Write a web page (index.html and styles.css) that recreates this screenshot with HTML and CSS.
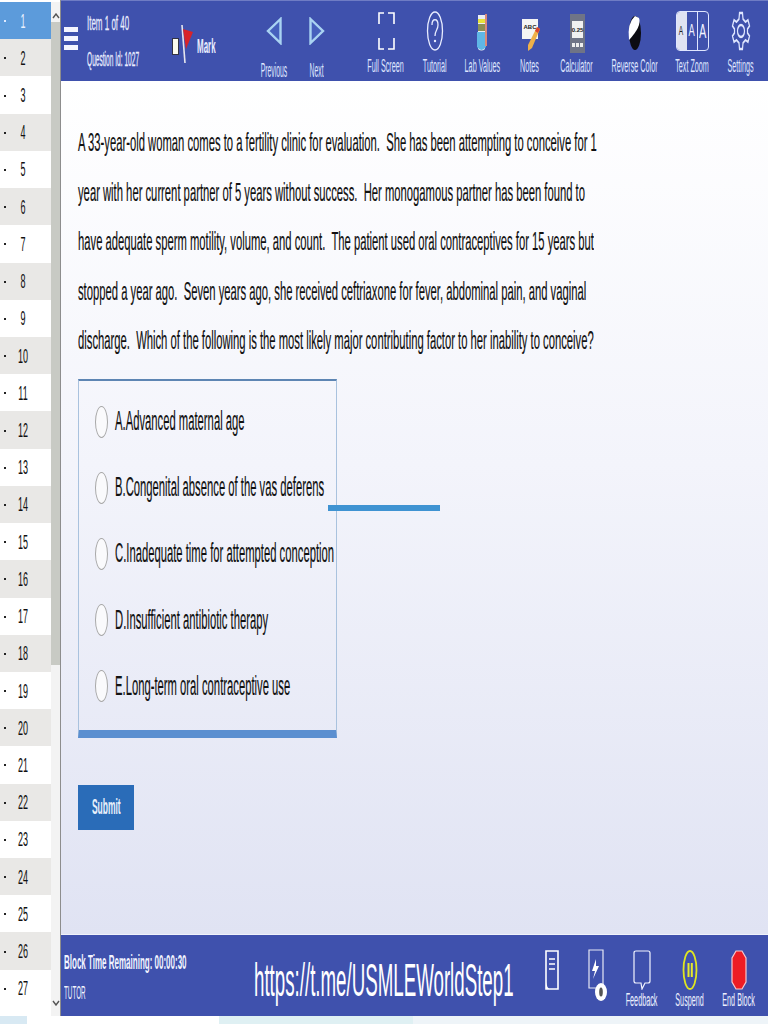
FILE: index.html
```html
<!DOCTYPE html>
<html lang="en">
<head>
<meta charset="utf-8">
<title>Item 1 of 40</title>
<link rel="stylesheet" href="styles.css">
</head>
<body>
<div class="app">
  <div class="top">
    <aside class="side">
      <ul class="rows" id="rows">
        <li class="row active"><i></i><span>1</span></li>
        <li class="row"><i></i><span>2</span></li><li class="row"><i></i><span>3</span></li><li class="row"><i></i><span>4</span></li>
        <li class="row"><i></i><span>5</span></li><li class="row"><i></i><span>6</span></li><li class="row"><i></i><span>7</span></li>
        <li class="row"><i></i><span>8</span></li><li class="row"><i></i><span>9</span></li><li class="row"><i></i><span>10</span></li>
        <li class="row"><i></i><span>11</span></li><li class="row"><i></i><span>12</span></li><li class="row"><i></i><span>13</span></li>
        <li class="row"><i></i><span>14</span></li><li class="row"><i></i><span>15</span></li><li class="row"><i></i><span>16</span></li>
        <li class="row"><i></i><span>17</span></li><li class="row"><i></i><span>18</span></li><li class="row"><i></i><span>19</span></li>
        <li class="row"><i></i><span>20</span></li><li class="row"><i></i><span>21</span></li><li class="row"><i></i><span>22</span></li>
        <li class="row"><i></i><span>23</span></li><li class="row"><i></i><span>24</span></li><li class="row"><i></i><span>25</span></li>
        <li class="row"><i></i><span>26</span></li><li class="row"><i></i><span>27</span></li>
      </ul>
      <div class="scroll">
        <svg class="arrow" viewBox="0 0 8 6"><path d="M1 5 4 1l3 4" fill="none" stroke="#555" stroke-width="1.4"/></svg>
        <div class="thumb"></div>
        <svg class="arrow down" viewBox="0 0 8 6"><path d="M1 1l3 4 3-4" fill="none" stroke="#555" stroke-width="1.4"/></svg>
      </div>
    </aside>
    <main class="main">
      <header class="head">
        <div class="burger"><b></b><b></b><b></b></div>
        <div class="item">
          <div class="t t-item">Item 1 of 40</div>
          <div class="t t-qid">Question Id: 1027</div>
        </div>
        <div class="mark">
          <span class="box"></span>
          <svg class="flag" viewBox="0 0 12 38"><path d="M1 0 4 38" stroke="#e6e6ee" stroke-width="1.6"/><path d="M2 4l10 3-7 17z" fill="#d8232a"/></svg>
          <span class="t t-mark">Mark</span>
        </div>
        <div class="nav">
          <div class="tool"><svg class="ic-nav" viewBox="0 0 16 28"><path d="M14.500 2 2 14l12.500 12z" fill="#4660bd" stroke="#a9d3f2" stroke-width="2.400"/></svg><span class="t lab nav-lab">Previous</span></div>
          <div class="tool"><svg class="ic-nav" viewBox="0 0 16 28"><path d="M1.500 2 14 14 1.500 26z" fill="#4660bd" stroke="#a9d3f2" stroke-width="2.400"/></svg><span class="t lab nav-lab">Next</span></div>
        </div>
        <div class="tools">
          <div class="tool"><svg class="ic" viewBox="0 0 40 40"><path d="M18 2h-5v11M22 2h6v11M13 27v11h5M28 27v11h-6" fill="none" stroke="#fff" stroke-width="1.600"/></svg><span class="t lab">Full Screen</span></div>
          <div class="tool"><svg class="ic" viewBox="0 0 40 40"><ellipse cx="20" cy="20" rx="7.500" ry="19" fill="none" stroke="#e8ecff" stroke-width="1.300"/><path d="M17 14c0-7 6-7 6 0 0 5-3 5-3 11" fill="none" stroke="#e8ecff" stroke-width="1.300"/><circle cx="20" cy="30" r="1.200" fill="#e8ecff"/></svg><span class="t lab">Tutorial</span></div>
          <div class="tool"><svg class="ic" viewBox="0 0 40 40"><path d="M16 4h7v34q-3.500 3-7 0z" fill="#e9eef5"/><path d="M15 21h9v15q-4.500 6-9 0z" fill="#5fb7e6"/><path d="M16 8h7v4h-7z" fill="#e7e23a"/><path d="M16 13h7v7h-7z" fill="#8a8f55"/><path d="M23 3h2v32h-2z" fill="#d98a7a"/></svg><span class="t lab">Lab Values</span></div>
          <div class="tool"><svg class="ic" viewBox="0 0 40 40"><path d="M12 8h16v20H12z" fill="#f4f4f4"/><text class="abc" x="20" y="18">ABC</text><path d="M27 16l3 2-8 19-4 3 0-6z" fill="#eeb049"/><path d="M27 16l3 2-2 4-3-2z" fill="#d9432f"/></svg><span class="t lab">Notes</span></div>
          <div class="tool"><svg class="ic" viewBox="0 0 40 40"><path d="M13 3h15v39H13z" fill="#6f7486"/><path d="M15 10h11v17H15z" fill="#f1f1f1"/><text class="abc" x="20.500" y="21">0.25</text><path d="M15 32h3v4h-3zM19 32h3v4h-3zM23 32h3v4h-3z" fill="#eee"/></svg><span class="t lab">Calculator</span></div>
          <div class="tool"><svg class="ic" viewBox="0 0 40 40"><ellipse cx="20" cy="22" rx="6" ry="17" fill="#0c0c12"/><path d="M24 7Q27 15 14 29 12 12 20 5z" fill="#fff"/></svg><span class="t lab">Reverse Color</span></div>
          <div class="tool"><div class="zoom"><span class="z1"><em>A</em></span><span class="z2"><em>A</em></span><span class="z3"><em>A</em></span></div><span class="t lab">Text Zoom</span></div>
          <div class="tool"><svg class="ic" viewBox="0 0 40 40"><g transform="translate(10 0) scale(.5 1)"><path d="M17 2h6l1 6 5 3 5-2 3 6-4 3v4l4 3-3 6-5-2-5 3-1 6h-6l-1-6-5-3-5 2-3-6 4-3v-4l-4-3 3-6 5 2 5-3z" fill="none" stroke="#dfe6ff" stroke-width="2.400"/><ellipse cx="20" cy="20" rx="7" ry="6" fill="none" stroke="#dfe6ff" stroke-width="2.400"/></g></svg><span class="t lab">Settings</span></div>
        </div>
      </header>
      <section class="content">
        <div class="stem">
          <p class="t q">A 33-year-old woman comes to a fertility clinic for evaluation.&nbsp; She has been attempting to conceive for 1</p>
          <p class="t q">year with her current partner of 5 years without success.&nbsp; Her monogamous partner has been found to</p>
          <p class="t q">have adequate sperm motility, volume, and count.&nbsp; The patient used oral contraceptives for 15 years but</p>
          <p class="t q">stopped a year ago.&nbsp; Seven years ago, she received ceftriaxone for fever, abdominal pain, and vaginal</p>
          <p class="t q">discharge.&nbsp; Which of the following is the most likely major contributing factor to her inability to conceive?</p>
        </div>
        <div class="choices">
          <div class="opt"><span class="radio"></span><span class="t o">A.Advanced maternal age</span></div>
          <div class="opt"><span class="radio"></span><span class="t o">B.Congenital absence of the vas deferens</span></div>
          <div class="opt"><span class="radio"></span><span class="t o">C.Inadequate time for attempted conception</span></div>
          <div class="opt"><span class="radio"></span><span class="t o">D.Insufficient antibiotic therapy</span></div>
          <div class="opt"><span class="radio"></span><span class="t o">E.Long-term oral contraceptive use</span></div>
        </div>
        <div class="submit"><span class="t s">Submit</span></div>
        <div class="stray"></div>
      </section>
      <footer class="foot">
        <div class="timer">
          <div class="t f-b">Block Time Remaining: 00:00:30</div>
          <div class="t f-s">TUTOR</div>
        </div>
        <div class="t url">https://t.me/USMLEWorldStep1</div>
        <div class="ftools">
          <div class="tool"><svg class="fi" viewBox="0 0 30 40"><path d="M9 1h12v38H9z M9 32q0 7 3 7" fill="none" stroke="#fff" stroke-width="1.600"/><path d="M12 9h6M12 14h6M12 19h6" stroke="#fff" stroke-width="1.600"/></svg></div>
          <div class="tool"><svg class="fi fi-open" viewBox="0 0 30 40"><path d="M8 0h14v38H8z" fill="none" stroke="#e6e8f5" stroke-width="1.200"/><path d="M15 9l-4 12h3l-2 8 6-13h-3z" fill="#fff"/><ellipse cx="20" cy="42" rx="6" ry="9" fill="#fff"/><ellipse cx="20" cy="42" rx="1.800" ry="4.500" fill="#555"/></svg></div>
          <div class="tool"><svg class="fi" viewBox="0 0 30 40"><path d="M9 1h12q2 0 2 2v28q0 2-2 2h-3l-3 6-1-6H9q-2 0-2-2V3q0-2 2-2z" fill="none" stroke="#f2f4ff" stroke-width="1.200"/></svg><span class="t lab">Feedback</span></div>
          <div class="tool"><svg class="fi" viewBox="0 0 30 40"><ellipse cx="15" cy="20" rx="6.500" ry="19" fill="#3f51ad" stroke="#dfe620" stroke-width="1.800"/><path d="M12.500 13h2v14h-2zM15.800 13h2v14h-2z" fill="#e6ea2a"/></svg><span class="t lab">Suspend</span></div>
          <div class="tool"><svg class="fi" viewBox="0 0 30 40"><path d="M12 1h6l4 7v24l-4 7h-6l-4-7V8z" fill="#ee1c25" stroke="#f6c9cd" stroke-width="1.200"/></svg><span class="t lab">End Block</span></div>
        </div>
      </footer>
    </main>
  </div>
  <div class="strip"><span></span><span></span><span></span><span></span></div>
</div>
</body>
</html>
```
FILE: styles.css
```css
* { box-sizing: border-box; }
html, body { margin: 0; padding: 0; }
body { width: 768px; height: 1024px; overflow: hidden; background: #fff; font-family: "Liberation Sans", Arial, sans-serif; color: #111; }
.app { display: flex; flex-direction: column; height: 1024px; }
.top { display: flex; height: 1016px; }

.side { display: flex; width: 60px; flex: none; padding-top: 2px; background: #fff; }
.rows { list-style: none; margin: 0; padding: 0; width: 51px; flex: none; }
.row { display: flex; align-items: center; height: 37.23px; padding-top: 1px; font-size: 20px; background: #fff; }
.row:nth-child(even) { background: #e9e8e6; }
.row.active { background: #5c9bdb; color: #e8f1ff; }
.row i { width: 2px; height: 2px; margin-left: 4px; background: #222; flex: none; }
.row.active i { background: #dfeaff; }
.row span { width: 34px; text-align: center; transform: scaleX(.45); flex: none; }
.scroll { width: 9px; flex: none; display: flex; flex-direction: column; background: #f3f3f3; position: relative; }
.arrow { width: 8px; height: 6px; margin: 11px 0 0 1px; flex: none; }
.thumb { width: 9px; height: 643px; margin-top: 3px; background: #c8cac4; flex: none; }
.arrow.down { margin-top: 335px; }

.main { flex: 1; display: flex; flex-direction: column; border-left: 1px solid #8d8d8d; min-width: 0; }
.t { white-space: nowrap; transform-origin: 0 50%; }

.head { height: 81px; flex: none; display: flex; background: #3f51ad; border-top: 1px solid #6f7cc4; color: #e9edff; }
.burger { width: 26px; flex: none; padding: 26px 0 0 3px; }
.burger b { display: block; width: 14px; height: 5px; margin-bottom: 4px; background: #f5f5ff; }
.item { width: 85px; flex: none; display: flex; flex-direction: column; gap: 16px; padding-top: 12px; }
.t-item { font-size: 21px; line-height: 20px; transform: scaleX(.38); -webkit-text-stroke: .3px #e9edff; }
.t-qid { font-size: 20px; line-height: 20px; transform: scaleX(.33); -webkit-text-stroke: .3px #e9edff; }
.mark { width: 80px; flex: none; display: flex; align-items: center; padding-top: 5px; }
.box { width: 7px; height: 17px; margin-top: 5px; background: #fbfbef; border: 1px solid #334; flex: none; }
.flag { width: 12px; height: 38px; margin: 0 4px 0 2px; flex: none; }
.t-mark { font-size: 21px; font-weight: 700; transform: scaleX(.38); margin-top: 5px; }
.nav { display: grid; grid-template-columns: 44px 42px; width: 109px; flex: none; }
.nav .ic-nav { width: 16px; height: 28px; margin-top: 16px; flex: none; }
.nav .nav-lab { margin-top: 17px; font-size: 20px; line-height: 17px; transform: scaleX(.34); }
.tools { display: grid; grid-template-columns: 50px 48px 46px 50px 44px 72px 42px 55px; flex: none; }
.tool { display: flex; flex-direction: column; align-items: center; min-width: 0; }
.ic { width: 40px; height: 40px; margin-top: 10px; flex: none; overflow: visible; }
.lab { font-size: 18px; line-height: 17px; color: #dfe6ff; transform: scaleX(.4); transform-origin: 50% 50%; margin-top: 7px; }
.abc { font: 700 6px "Liberation Sans", sans-serif; text-anchor: middle; fill: #222; }
.zoom { display: flex; width: 33px; height: 40px; margin-top: 10px; border: 1px solid #dfe6ff; border-radius: 4px; overflow: hidden; background: #3f51ad; color: #f2f4ff; flex: none; }
.zoom span { flex: 1; min-width: 0; display: flex; align-items: center; justify-content: center; }
.zoom em { font-style: normal; display: block; transform: scaleX(.55); }
.z1 { background: #dfe3f2; color: #222; font-size: 12px; }
.z2 { font-size: 17px; border-right: 1px solid #dfe6ff; }
.z3 { font-size: 20px; }

.content { flex: 1; position: relative; min-height: 0; padding: 37px 0 0 17px; background: linear-gradient(#fff 0%, #f3f4fb 45%, #e0e3f3 100%); }
.q { margin: 0; font-size: 25.5px; line-height: 49.5px; height: 49.5px; transform: scaleX(.441); -webkit-text-stroke: .2px #111; }
.choices { width: 259px; height: 359px; margin-top: 13px; border: 1px solid #a9c2de; border-top: 2px solid #5d85b3; border-bottom: 8px solid #5b8fd0; padding-top: 8px; }
.opt { display: flex; align-items: center; height: 66.2px; padding-left: 16px; }
.radio { width: 13px; height: 32px; border: 1px solid #a8a8a8; border-radius: 50%; background: #fafafc; flex: none; margin-right: 7px; }
.o { font-size: 27px; transform: scaleX(.417); -webkit-text-stroke: .2px #111; }
.submit { width: 56px; height: 45px; margin-top: 47px; background: #2a6cb8; display: flex; align-items: center; justify-content: center; color: #e8f0fb; }
.s { font-size: 22px; font-weight: 700; transform: scaleX(.386); transform-origin: 50% 50%; }
.stray { position: absolute; left: 267px; top: 424px; width: 112px; height: 6px; background: #3f93d2; }

.foot { height: 82px; flex: none; display: flex; background: #3f51ad; border-top: 1px solid #f0f2fa; color: #f2f4ff; }
.timer { width: 193px; flex: none; padding: 18px 0 0 3px; display: flex; flex-direction: column; gap: 14px; }
.f-b { font-size: 20px; line-height: 18px; font-weight: 700; transform: scaleX(.4); }
.f-s { font-size: 18px; line-height: 16px; transform: scaleX(.35); }
.url { width: 276px; flex: none; font-size: 47px; line-height: 81px; padding-top: 4px; transform: scaleX(.398); color: #fff; }
.ftools { display: grid; grid-template-columns: 44px 44px 48px 48px 50px; flex: none; }
.fi { width: 30px; height: 40px; margin-top: 15px; flex: none; }
.fi-open { overflow: visible; }
.ftools .lab { margin-top: 2px; color: #eef1ff; }

.strip { display: flex; height: 8px; }
.strip span { display: block; }
.strip span:nth-child(1) { width: 27px; background: #d8e9f3; }
.strip span:nth-child(2) { width: 192px; background: #fff; }
.strip span:nth-child(3) { width: 194px; background: #dff0f3; }
.strip span:nth-child(4) { flex: 1; background: #eef4f8; }
```
